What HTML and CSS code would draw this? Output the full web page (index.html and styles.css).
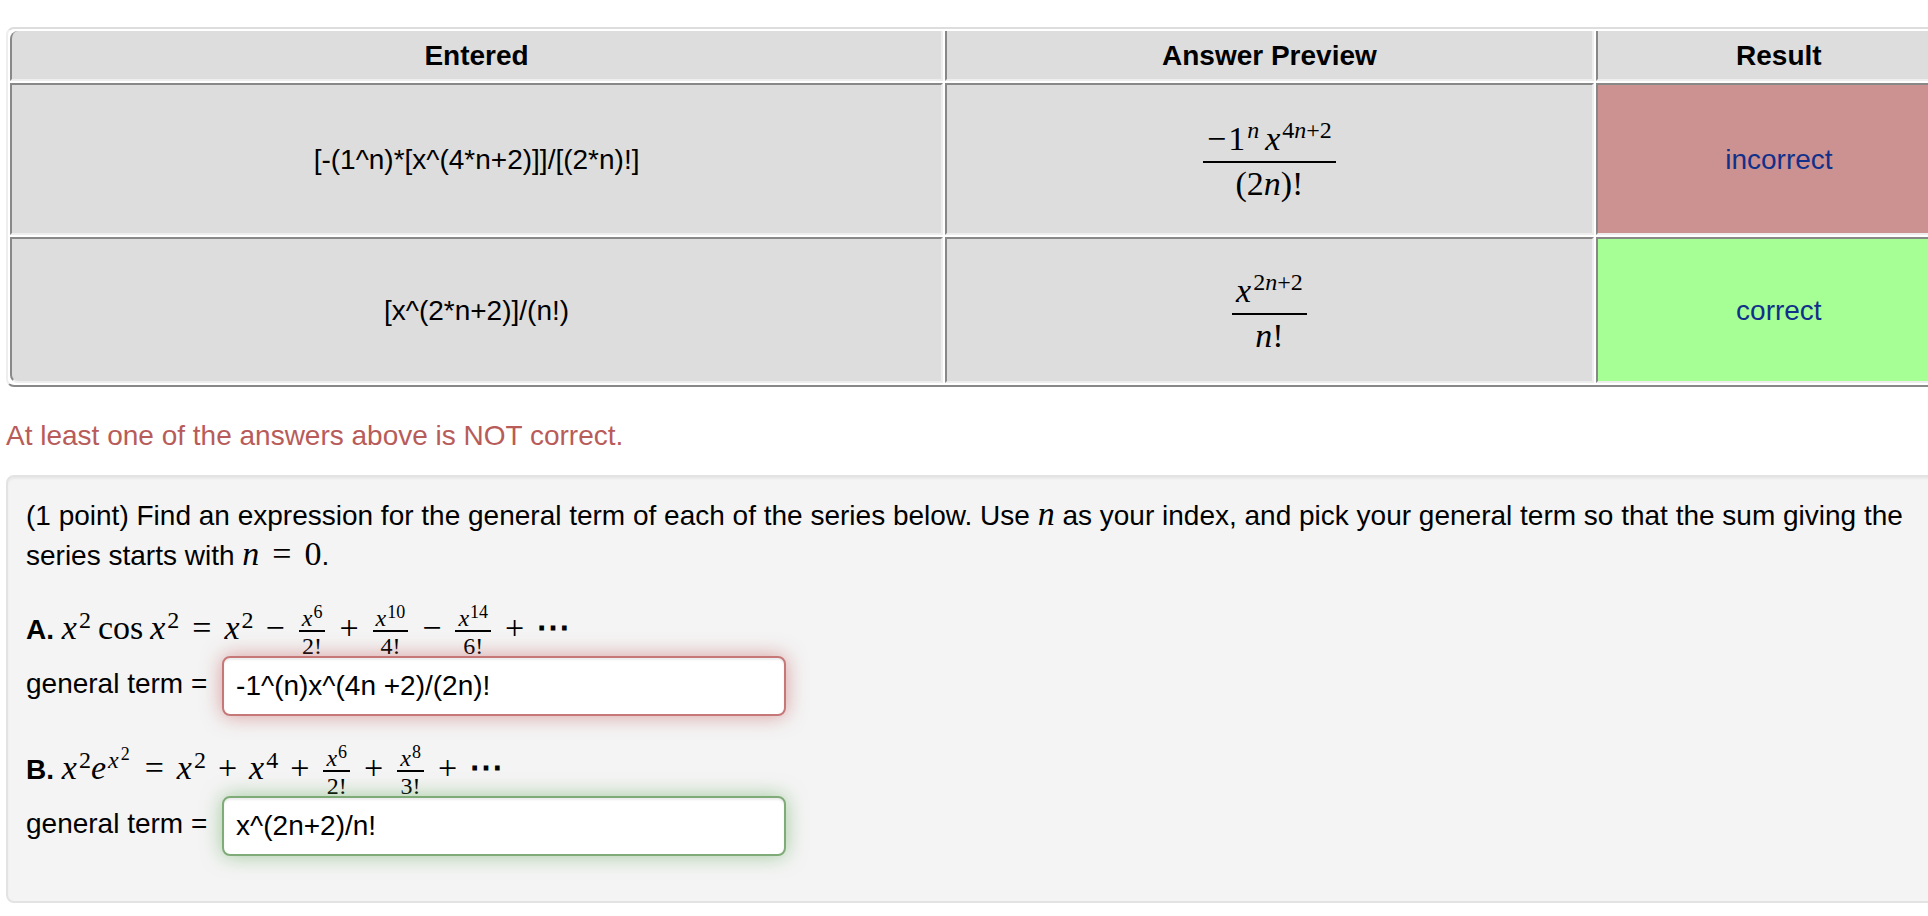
FILE: index.html
```html
<!DOCTYPE html>
<html lang="en">
<head>
<meta charset="utf-8">
<title>Problem</title>
<link rel="stylesheet" href="styles.css">
</head>
<body>
<main class="page">
  <table class="results">
    <colgroup><col class="col-entered"><col class="col-preview"><col class="col-result"></colgroup>
    <thead>
      <tr><th scope="col">Entered</th><th scope="col">Answer Preview</th><th scope="col">Result</th></tr>
    </thead>
    <tbody>
      <tr class="row-a">
        <td>[-(1^n)*[x^(4*n+2)]]/[(2*n)!]</td>
        <td class="preview"><span class="math frac display"><span class="num"><span class="neg">−</span>1<sup><i>n</i></sup><i class="factor">x</i><sup>4<i>n</i>+2</sup></span><span class="den">(2<i>n</i>)!</span></span></td>
        <td class="incorrect"><a href="#answer-a">incorrect</a></td>
      </tr>
      <tr class="row-b">
        <td>[x^(2*n+2)]/(n!)</td>
        <td class="preview"><span class="math frac display"><span class="num"><i>x</i><sup>2<i>n</i>+2</sup></span><span class="den"><i>n</i>!</span></span></td>
        <td class="correct"><a href="#answer-b">correct</a></td>
      </tr>
    </tbody>
  </table>

  <p class="message">At least one of the answers above is NOT correct.</p>

  <section class="problem">
    <p>(1 point) Find an expression for the general term of each of the series below. Use <span class="math"><i>n</i></span> as your index, and pick your general term so that the sum giving the series starts with <span class="math"><i>n</i><span class="rel">=</span>0</span>.</p>

    <div class="part">
      <div class="equation"><b>A.</b> <span class="math"><i>x</i><sup>2</sup><span class="fn">cos</span><i>x</i><sup>2</sup><span class="rel">=</span><i>x</i><sup>2</sup><span class="bin">−</span><span class="frac"><span class="num"><i>x</i><sup>6</sup></span><span class="den">2!</span></span><span class="bin">+</span><span class="frac"><span class="num"><i>x</i><sup>10</sup></span><span class="den">4!</span></span><span class="bin">−</span><span class="frac"><span class="num"><i>x</i><sup>14</sup></span><span class="den">6!</span></span><span class="bin">+</span><span class="dots">⋯</span></span></div>
      <div class="answer"><label for="answer-a">general term =</label> <input class="wrong" id="answer-a" type="text" value="-1^(n)x^(4n +2)/(2n)!"></div>
    </div>

    <div class="part">
      <div class="equation"><b>B.</b> <span class="math"><i>x</i><sup>2</sup><i>e</i><sup><i>x</i><sup>2</sup></sup><span class="rel">=</span><i>x</i><sup>2</sup><span class="bin">+</span><i>x</i><sup>4</sup><span class="bin">+</span><span class="frac"><span class="num"><i>x</i><sup>6</sup></span><span class="den">2!</span></span><span class="bin">+</span><span class="frac"><span class="num"><i>x</i><sup>8</sup></span><span class="den">3!</span></span><span class="bin">+</span><span class="dots">⋯</span></span></div>
      <div class="answer"><label for="answer-b">general term =</label> <input class="right" id="answer-b" type="text" value="x^(2n+2)/n!"></div>
    </div>
  </section>
</main>
</body>
</html>
```

FILE: styles.css
```css
* { box-sizing: border-box; }

body {
  margin: 0;
  background: #fff;
  color: #000;
  font: 28px/40px "Liberation Sans", Arial, sans-serif;
  overflow-x: hidden;
}

p { margin: 0; }

/* The content runs past the right edge of the window. */
.page { margin: 27px -38px 0 6px; }

/* Results table */
.results {
  width: 100%;
  table-layout: fixed;
  border-collapse: separate;
  border-spacing: 2px;
  border: 2px solid;
  border-color: #ddd #888 #888 #eee;
  border-radius: 8px;
  text-align: center;
}
.col-entered { width: 47.9%; }
.col-preview { width: 33.3%; }
.col-result { width: 18.8%; }

.results th,
.results td {
  padding: 5px 4px 3px;
  background: #ddd;
  border: 2px solid;
  border-color: #888 #eee #eee #888;
  vertical-align: middle;
}
.results th { border-top: 0; }
.results th:first-child { border-top-left-radius: 8px; }
.results tr:last-child td:first-child { border-bottom-left-radius: 8px; }
.results .preview { line-height: 0; }
.row-a .preview { padding: 34px 4px 28px; }
.row-b .preview { padding: 32px 4px 24px; }
.results .incorrect { background: #cc9291; }
.results .correct { background: #a6ff95; }
.results a { color: #10308a; text-decoration: none; }

.message { margin: 29px 0 19px; color: #b85c5a; }

/* Problem text */
.problem {
  padding: 19px 18px 18px;
  background: #f4f4f4;
  border: 2px solid #e3e3e3;
  border-radius: 8px;
  box-shadow: inset 0 2px 2px rgba(0, 0, 0, .05);
}
.part { margin-top: 30px; }
.part:last-child { margin-bottom: 27px; }
.equation { white-space: nowrap; }

.answer input {
  width: 564px;
  height: 60px;
  margin-left: 7px;
  padding: 4px 12px;
  vertical-align: middle;
  border: 2px solid;
  border-radius: 8px;
  background: #fff;
  color: #000;
  font: inherit;
  outline: 0;
}
.answer .wrong {
  border-color: #c67878;
  box-shadow: inset 0 2px 2px rgba(0, 0, 0, .075), 0 0 20px rgba(190, 70, 70, .5);
}
.answer .right {
  border-color: #7fab78;
  box-shadow: inset 0 2px 2px rgba(0, 0, 0, .075), 0 0 20px rgba(80, 160, 70, .5);
}

/* Formulas */
.math {
  font-family: "Liberation Serif", "Times New Roman", serif;
  font-size: 34px;
  line-height: 34px;
}
.math sup {
  margin-left: 2px;
  font-size: 24px;
  line-height: 0;
  vertical-align: 11px;
}
.math sup sup { margin-right: 2px; font-size: 18px; vertical-align: 8px; }
.rel { margin: 0 13px; }
.bin { margin: 0 12px; }
.fn { margin: 0 7px; }
.neg { margin-right: 2px; }
.factor { margin-left: 6px; }
.dots { font-weight: bold; }

.frac {
  display: inline-flex;
  flex-direction: column;
  margin: 0 2px;
  vertical-align: middle;
  font-size: 24px;
  text-align: center;
}
.frac .num {
  padding: 0 3px;
  border-bottom: 2px solid #000;
  line-height: 24px;
}
.frac .den { height: 24px; line-height: 28px; }
.frac .num sup { margin-left: 1px; font-size: 18px; vertical-align: 8px; }

.display { margin: 0; font-size: 34px; }
.display .num { padding: 0 4px 2px; line-height: 40px; }
.display .den { height: 42px; line-height: 42px; }
.display .num sup { margin-left: 2px; font-size: 24px; vertical-align: 12px; }
```
